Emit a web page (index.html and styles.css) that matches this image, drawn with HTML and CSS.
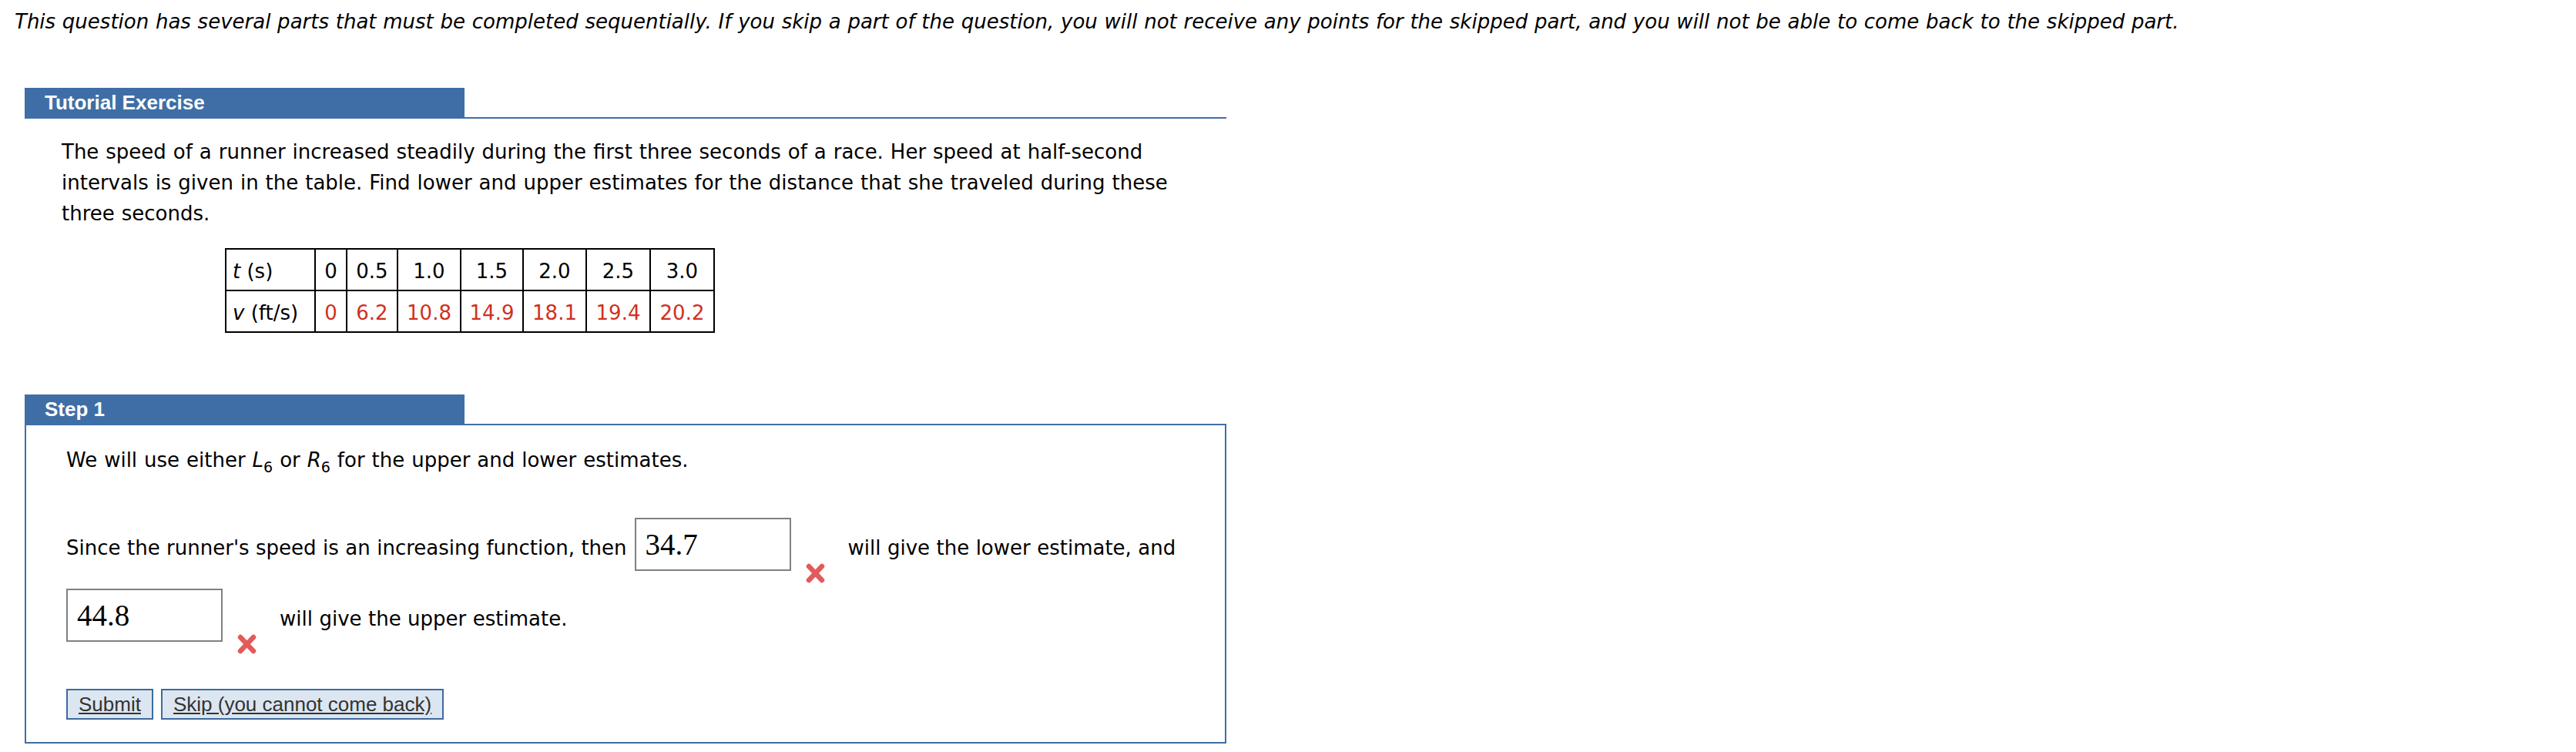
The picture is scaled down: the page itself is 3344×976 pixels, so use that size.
FILE: index.html
```html
<!DOCTYPE html>
<html lang="en">
<head>
<meta charset="utf-8">
<title>Tutorial Exercise</title>
<link rel="stylesheet" href="styles.css">
</head>
<body>
<p class="notice">This question has several parts that must be completed sequentially. If you skip a part of the question, you will not receive any points for the skipped part, and you will not be able to come back to the skipped part.</p>

<section class="panel">
  <div class="panel-head"><div class="panel-title">Tutorial Exercise</div></div>
  <div class="panel-body intro">
    <p class="para">The speed of a runner increased steadily during the first three seconds of a race. Her speed at half-second intervals is given in the table. Find lower and upper estimates for the distance that she traveled during these three seconds.</p>
    <table class="data">
      <tr>
        <td class="lbl"><i>t</i> (s)</td>
        <td>0</td><td>0.5</td><td>1.0</td><td>1.5</td><td>2.0</td><td>2.5</td><td>3.0</td>
      </tr>
      <tr class="vals">
        <td class="lbl"><i>v</i> (ft/s)</td>
        <td>0</td><td>6.2</td><td>10.8</td><td>14.9</td><td>18.1</td><td>19.4</td><td>20.2</td>
      </tr>
    </table>
  </div>
</section>

<section class="panel step">
  <div class="panel-head"><div class="panel-title">Step 1</div></div>
  <div class="panel-body boxed">
    <p class="line">We will use either <i>L</i><sub>6</sub> or <i>R</i><sub>6</sub> for the upper and lower estimates.</p>
    <div class="row first">
      <span class="txt">Since the runner's speed is an increasing function, then</span>
      <input class="answer" type="text" value="34.7">
      <svg class="wrong" viewBox="0 0 27 26" width="27" height="26" aria-label="incorrect"><path d="M5 4 L22 22 M22 4 L5 22" /></svg>
      <span class="txt after">will give the lower estimate, and</span>
    </div>
    <div class="row second">
      <input class="answer first-in" type="text" value="44.8">
      <svg class="wrong" viewBox="0 0 27 26" width="27" height="26" aria-label="incorrect"><path d="M5 4 L22 22 M22 4 L5 22" /></svg>
      <span class="txt after">will give the upper estimate.</span>
    </div>
    <div class="buttons">
      <button class="btn" type="button">Submit</button>
      <button class="btn" type="button">Skip (you cannot come back)</button>
    </div>
  </div>
</section>
</body>
</html>
```
FILE: styles.css
```css
html, body {
  background: #ffffff;
}
body {
  margin: 0;
  font-family: "DejaVu Sans", Verdana, sans-serif;
  font-size: 26px;
  line-height: 40px;
  word-spacing: 0.7px;
  color: #000000;
}
.notice {
  margin: 0;
  padding: 8px 0 0 19px;
  font-style: italic;
  word-spacing: 0.47px;
}
.panel {
  width: 1560px;
  margin: 66px 0 0 32px;
}
.panel.step {
  margin-top: 80px;
}
.panel-head {
  display: flex;
  height: 38px;
  border-bottom: 2px solid #3f6ea6;
}
.panel-title {
  width: 571px;
  height: 38px;
  background: #3f6ea6;
  color: #ffffff;
  font-family: "Liberation Sans", Arial, sans-serif;
  font-weight: bold;
  font-size: 26px;
  line-height: 38px;
  word-spacing: 0;
  padding-left: 26px;
  box-sizing: border-box;
}
.panel-body.intro {
  padding: 23px 48px 0 48px;
}
.para {
  margin: 0;
}
.data {
  border-collapse: collapse;
  margin: 25px 0 0 212px;
  word-spacing: 0;
}
.data td {
  border: 2px solid #000000;
  padding: 8px 0 4px 0;
  text-align: center;
  line-height: 40px;
  white-space: nowrap;
}
.data td:nth-child(1) { width: 106px; text-align: left; padding-left: 8px; }
.data td:nth-child(2) { width: 39px; }
.data td:nth-child(3) { width: 64px; }
.data td:nth-child(4) { width: 80px; }
.data td:nth-child(5) { width: 79px; }
.data td:nth-child(6) { width: 80px; }
.data td:nth-child(7) { width: 81px; }
.data td:nth-child(8) { width: 81px; }
.data .vals td { color: #d0301f; }
.data .vals td.lbl { color: #000000; }

.panel-body.boxed {
  border: 2px solid #3f6ea6;
  border-top: 0;
  padding: 25px 52px 29px 52px;
}
.line {
  margin: 0;
}
sub {
  font-size: 19px;
  line-height: 0;
  vertical-align: -7px;
}
.row {
  display: flex;
  align-items: flex-start;
  word-spacing: 0.2px;
}
.row.first {
  margin-top: 55px;
}
.row.second {
  margin-top: 7px;
}
.txt {
  margin-top: 19px;
}
.answer {
  box-sizing: border-box;
  width: 203px;
  height: 69px;
  margin: 0 0 0 10px;
  padding: 0 12px;
  border: 2px solid #808080;
  border-radius: 0;
  background: #ffffff;
  font-family: "Liberation Serif", "Times New Roman", serif;
  font-size: 39px;
  color: #000000;
  outline: none;
}
.answer.first-in {
  margin-left: 0;
}
.wrong {
  margin: 59px 0 0 18px;
  flex: none;
}
.wrong path {
  stroke: #e35a5a;
  stroke-width: 6.5;
  stroke-linecap: round;
  fill: none;
}
.after {
  margin-left: 29px;
}
.buttons {
  display: flex;
  gap: 10px;
  margin-top: 45px;
}
.btn {
  height: 40px;
  padding: 0 14px;
  border: 2px solid #3e6a9e;
  background: #dce6f0;
  color: #333333;
  font-family: "Liberation Sans", Arial, sans-serif;
  font-size: 26px;
  line-height: 34px;
  word-spacing: 0;
  text-decoration: underline;
  border-radius: 0;
  cursor: pointer;
}
```
